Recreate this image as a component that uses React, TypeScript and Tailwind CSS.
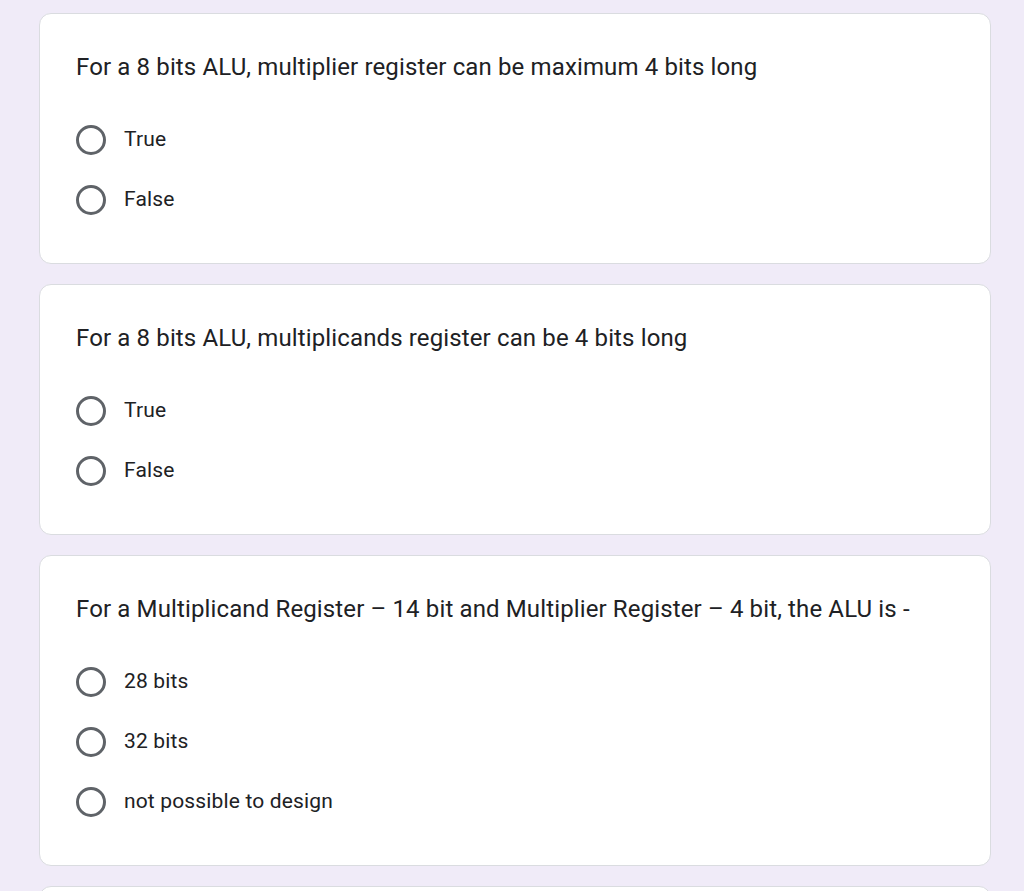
import React from 'react'

interface Question {
  title: string
  options: string[]
}

const questions: Question[] = [
  {
    title: 'For a 8 bits ALU, multiplier register can be maximum 4 bits long',
    options: ['True', 'False'],
  },
  {
    title: 'For a 8 bits ALU, multiplicands register can be 4 bits long',
    options: ['True', 'False'],
  },
  {
    title: 'For a Multiplicand Register – 14 bit and Multiplier Register – 4 bit, the ALU is -',
    options: ['28 bits', '32 bits', 'not possible to design'],
  },
]

function Radio() {
  return <span className="block w-[30px] h-[30px] rounded-full border-[3px] border-[#5f6368] shrink-0" />
}

function QuestionCard({ q }: { q: Question }) {
  return (
    <div className="bg-white border border-[#dadce0] rounded-[12px] px-[36px] pt-[38px] pb-[33px]">
      <h2 className="text-[24px] leading-[30px] text-[#202124] font-['Roboto',sans-serif] tracking-[0.13px]">
        {q.title}
      </h2>
      <div className="mt-[28px]">
        {q.options.map((opt) => (
          <label key={opt} className="flex items-center h-[60px] gap-[18px] cursor-pointer">
            <Radio />
            <span className="text-[21px] text-[#202124] font-['Roboto',sans-serif] tracking-[0.15px]">{opt}</span>
          </label>
        ))}
      </div>
    </div>
  )
}

export default function App() {
  return (
    <div className="h-[891px] overflow-hidden bg-[#f0ebf8] pt-[13px]">
      <div className="ml-[39px] w-[952px] flex flex-col gap-[20px]">
        {questions.map((q) => (
          <QuestionCard key={q.title} q={q} />
        ))}
        <div className="bg-white border border-[#dadce0] rounded-[12px] h-[200px]" />
      </div>
    </div>
  )
}
